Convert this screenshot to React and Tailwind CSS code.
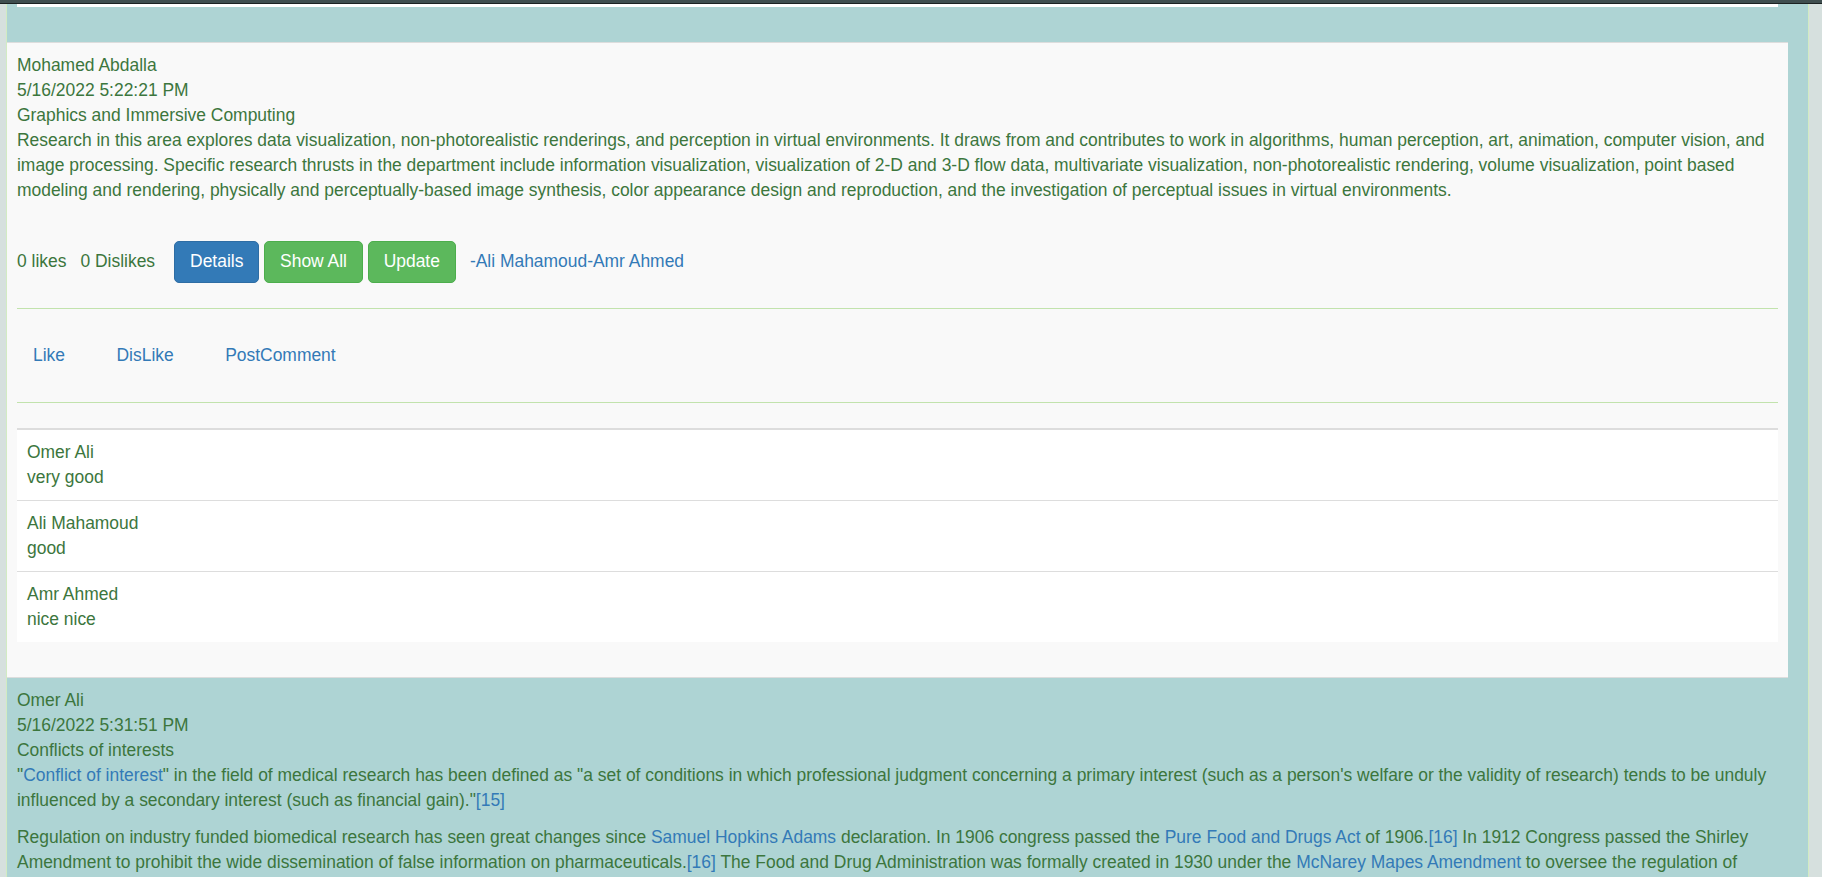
import React from 'react';

const comments = [
  { name: 'Omer Ali', text: 'very good' },
  { name: 'Ali Mahamoud', text: 'good' },
  { name: 'Amr Ahmed', text: 'nice nice' },
];

function Btn({ color, children }) {
  const styles = {
    blue: 'bg-[#337ab7] border-[#2e6da4]',
    green: 'bg-[#5cb85c] border-[#4cae4c]',
  };
  return (
    <button className={`${styles[color]} border text-white px-[15px] py-[7.75px] leading-[25px] rounded-[5px]`}>
      {children}
    </button>
  );
}

function A({ children }) {
  return <a href="#" className="text-[#337ab7]">{children}</a>;
}

export default function App() {
  return (
    <div className="h-screen overflow-hidden bg-[#d6e0de] font-['Liberation_Sans',Arial,sans-serif] text-[17.45px] leading-[25px] text-[#3c763d]">
      <div className="h-[3px] bg-[#3f4e4f]" />
      <div className="h-px bg-[#1b2222]" />

      <div className="flex h-full">
        <div className="w-[6px] shrink-0" />

        <div className="flex-1 bg-[#aed4d4] border-x border-[#d2ebc3]">
          <div className="h-[3px] bg-white ml-[10px] mr-[30px]" />

          {/* post 1 */}
          <div className="mt-[35px] mr-[20px] bg-[#f9f9f9] border-y border-[#dddddd] p-[10px]">
            <div>Mohamed Abdalla</div>
            <div>5/16/2022 5:22:21 PM</div>
            <div>Graphics and Immersive Computing</div>
            <p className="mb-[12.5px]">
              Research in this area explores data visualization, non-photorealistic renderings, and perception in virtual environments. It draws from and contributes to work in algorithms, human perception, art, animation, computer vision, and image processing. Specific research thrusts in the department include information visualization, visualization of 2-D and 3-D flow data, multivariate visualization, non-photorealistic rendering, volume visualization, point based modeling and rendering, physically and perceptually-based image synthesis, color appearance design and reproduction, and the investigation of perceptual issues in virtual environments.
            </p>

            <div className="flex items-center pt-[25px]">
              <span>0 likes</span>
              <span className="ml-[14px]">0 Dislikes</span>
              <div className="ml-[19px] flex gap-[4.7px]">
                <Btn color="blue">Details</Btn>
                <Btn color="green">Show All</Btn>
                <Btn color="green">Update</Btn>
              </div>
              <span className="ml-[14px]"><A>-Ali Mahamoud-Amr Ahmed</A></span>
            </div>

            <hr className="my-[25px] border-0 border-t border-[#c2e3ad]" />

            <div className="flex items-center h-[42.5px] pl-[16px] gap-[51.5px]">
              <A>Like</A>
              <A>DisLike</A>
              <A>PostComment</A>
            </div>

            <hr className="my-[25px] border-0 border-t border-[#c2e3ad]" />

            {/* comments */}
            <div className="bg-white border-t-2 border-[#dddddd] mb-[25px]">
              {comments.map((c, i) => (
                <div key={c.name} className={`p-[10px] ${i > 0 ? 'border-t border-[#dddddd]' : ''}`}>
                  <div>{c.name}</div>
                  <div>{c.text}</div>
                </div>
              ))}
            </div>
          </div>

          {/* post 2 */}
          <div className="pt-[10px] pl-[10px] pr-[30px]">
            <div>Omer Ali</div>
            <div>5/16/2022 5:31:51 PM</div>
            <div>Conflicts of interests</div>
            <p className="mb-[12.5px]">
              "<A>Conflict of interest</A>" in the field of medical research has been defined as "a set of conditions in which professional judgment concerning a primary interest (such as a person's welfare or the validity of research) tends to be unduly influenced by a secondary interest (such as financial gain)."<A>[15]</A>
            </p>
            <p className="mb-[12.5px]">
              Regulation on industry funded biomedical research has seen great changes since <A>Samuel Hopkins Adams</A> declaration. In 1906 congress passed the <A>Pure Food and Drugs Act</A> of 1906.<A>[16]</A> In 1912 Congress passed the Shirley Amendment to prohibit the wide dissemination of false information on pharmaceuticals.<A>[16]</A> The Food and Drug Administration was formally created in 1930 under the <A>McNarey Mapes Amendment</A> to oversee the regulation of<br />
              food and drugs in the United States.<A>[16]</A>
            </p>
          </div>
        </div>

        <div className="w-[13px] shrink-0" />
      </div>
    </div>
  );
}
